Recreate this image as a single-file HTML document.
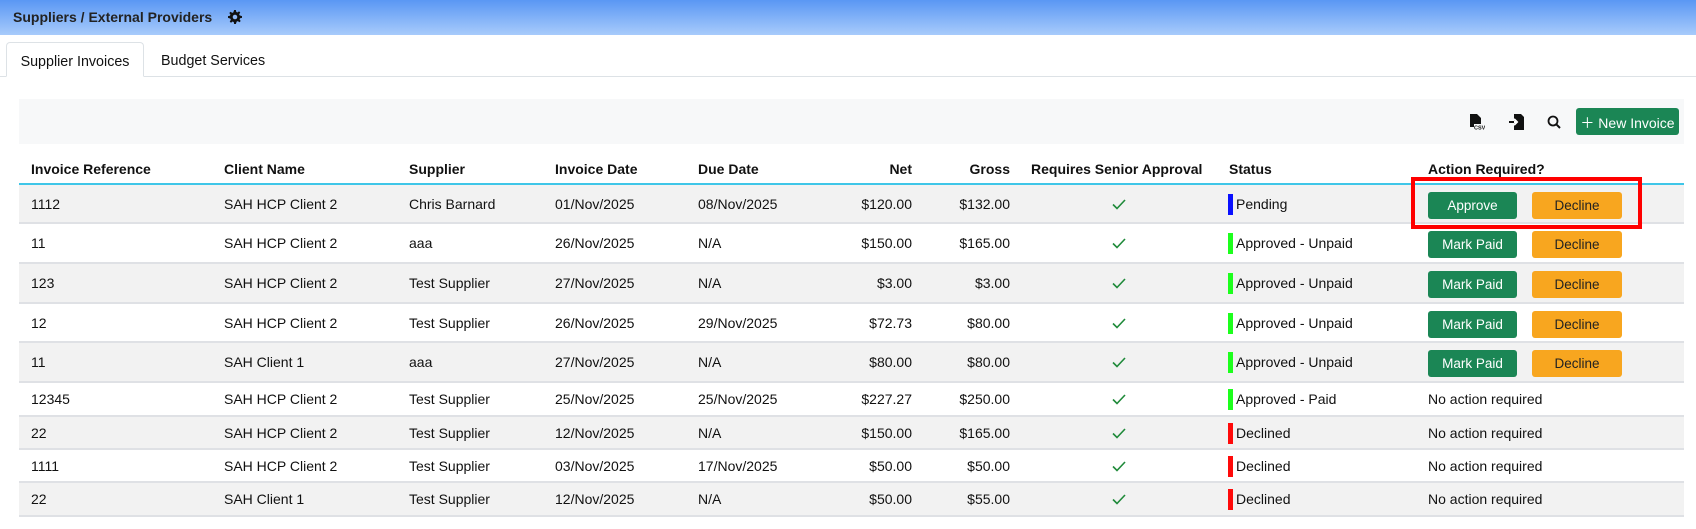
<!DOCTYPE html>
<html><head><style>
*{box-sizing:border-box;margin:0;padding:0}
body{width:1696px;height:529px;background:#fff;font-family:"Liberation Sans",Arial,sans-serif;color:#111;position:relative;overflow:hidden;font-size:14px}
.hdr{position:absolute;left:0;top:0;width:1696px;height:35px;background:linear-gradient(#5a97f4,#a8cbfb)}
.hdr .t{position:absolute;left:13px;top:9px;font-weight:bold;font-size:14px;color:#222}
.tabline{position:absolute;left:0;top:76px;width:1696px;height:1px;background:#dde2e6}
.tab{position:absolute;top:42px;height:35px;font-size:14.3px;padding-top:11px}
.tab.a{left:6px;width:138px;border:1px solid #dde2e6;border-bottom:1px solid #fff;border-radius:4px 4px 0 0;background:#fff;text-align:center}
.tb{position:absolute;left:19px;top:99px;width:1665px;height:45px;background:#f7f8f9}
.btn{position:absolute;border-radius:3px;text-align:center;font-size:13px}
.g{background:#1b8655;color:#fff}
.o{background:#f8a61f;color:#222}
.row{position:absolute;left:19px;width:1665px;border-bottom:2px solid #dfe1e5}
.c{position:absolute;font-size:14px}
.bar{position:absolute;width:5px;height:21px}
.th{font-weight:bold}
</style></head><body>
<div class="hdr"><div class="t">Suppliers / External Providers</div>
<svg style="position:absolute;left:228px;top:10px" width="14" height="14" viewBox="0 0 16 16"><path fill="#111" d="M7 0h2l.4 2.2 1.3.6 1.9-1.3 1.4 1.4-1.3 1.9.6 1.3L16 7v2l-2.2.4-.6 1.3 1.3 1.9-1.4 1.4-1.9-1.3-1.3.6L9 16H7l-.4-2.2-1.3-.6-1.9 1.3-1.4-1.4 1.3-1.9-.6-1.3L0 9V7l2.2-.4.6-1.3-1.3-1.9 1.4-1.4 1.9 1.3 1.3-.6z"/><circle cx="8" cy="8" r="2.6" fill="#8fb9f8"/></svg>
</div>
<div class="tabline"></div>
<div class="tab a">Supplier Invoices</div>
<div class="tab" style="left:161px">Budget Services</div>
<div class="tb"></div>
<svg style="position:absolute;left:1469px;top:114px" width="16" height="16" viewBox="0 0 16 16"><path d="M1 0h7l4 4v6H1z" fill="#111"/><path d="M1 10h4v3H1z" fill="#111"/><text x="5" y="15.5" font-size="5.5" font-weight="bold" fill="#111" font-family="Liberation Sans">CSV</text></svg>
<svg style="position:absolute;left:1509px;top:114px" width="16" height="16" viewBox="0 0 16 16"><path d="M5 0h7l3 3v13H5z" fill="#111"/><path d="M0 8h8M5 5l3 3-3 3" stroke="#fff" stroke-width="2" fill="none"/><path d="M0 8h5" stroke="#111" stroke-width="2"/></svg>
<svg style="position:absolute;left:1547px;top:115px" width="14" height="14" viewBox="0 0 14 14"><circle cx="6" cy="6" r="4.5" stroke="#111" stroke-width="1.8" fill="none"/><path d="M9.3 9.3L13 13" stroke="#111" stroke-width="2"/></svg>
<div class="btn g" style="left:1576px;top:108px;width:103px;height:27px;font-size:14px;padding-top:5px">&#xFF0B; New Invoice</div>

<div class="row" style="top:150px;height:35px;border-bottom:2px solid #3fc6e8"></div>
<div class="c th" style="left:31px;top:161px">Invoice Reference</div>
<div class="c th" style="left:224px;top:161px">Client Name</div>
<div class="c th" style="left:409px;top:161px">Supplier</div>
<div class="c th" style="left:555px;top:161px">Invoice Date</div>
<div class="c th" style="left:698px;top:161px">Due Date</div>
<div class="c th" style="right:784px;top:161px">Net</div>
<div class="c th" style="right:686px;top:161px">Gross</div>
<div class="c th" style="left:1031px;top:161px">Requires Senior Approval</div>
<div class="c th" style="left:1229px;top:161px">Status</div>
<div class="c th" style="left:1428px;top:161px">Action Required?</div>

<div id="rows"></div>
<script>
var R=[
["1112","SAH HCP Client 2","Chris Barnard","01/Nov/2025","08/Nov/2025","$120.00","$132.00","Pending","#0a10ff","Approve"],
["11","SAH HCP Client 2","aaa","26/Nov/2025","N/A","$150.00","$165.00","Approved - Unpaid","#1dff1d","Mark Paid"],
["123","SAH HCP Client 2","Test Supplier","27/Nov/2025","N/A","$3.00","$3.00","Approved - Unpaid","#1dff1d","Mark Paid"],
["12","SAH HCP Client 2","Test Supplier","26/Nov/2025","29/Nov/2025","$72.73","$80.00","Approved - Unpaid","#1dff1d","Mark Paid"],
["11","SAH Client 1","aaa","27/Nov/2025","N/A","$80.00","$80.00","Approved - Unpaid","#1dff1d","Mark Paid"],
["12345","SAH HCP Client 2","Test Supplier","25/Nov/2025","25/Nov/2025","$227.27","$250.00","Approved - Paid","#1dff1d",""],
["22","SAH HCP Client 2","Test Supplier","12/Nov/2025","N/A","$150.00","$165.00","Declined","#ff0a0a",""],
["1111","SAH HCP Client 2","Test Supplier","03/Nov/2025","17/Nov/2025","$50.00","$50.00","Declined","#ff0a0a",""],
["22","SAH Client 1","Test Supplier","12/Nov/2025","N/A","$50.00","$55.00","Declined","#ff0a0a",""]];
var tops=[185,224,264,304,343,383,417,450,483,517],h="";
for(var i=0;i<R.length;i++){var r=R[i],t=tops[i],hh=tops[i+1]-t,m=t+hh/2,ty=m-9;
h+='<div class="row" style="top:'+t+'px;height:'+hh+'px;background:'+(i%2?'#fff':'#f2f2f2')+'"></div>';
var L=[31,224,409,555,698];for(var j=0;j<5;j++)h+='<div class="c" style="left:'+L[j]+'px;top:'+ty+'px">'+r[j]+'</div>';
h+='<div class="c" style="right:784px;top:'+ty+'px">'+r[5]+'</div><div class="c" style="right:686px;top:'+ty+'px">'+r[6]+'</div>';
h+='<svg style="position:absolute;left:1112px;top:'+(m-6)+'px" width="14" height="11" viewBox="0 0 14 11"><path d="M1 5.5l4 4L13 1" stroke="#1f8a3a" stroke-width="1.6" fill="none"/></svg>';
h+='<div class="bar" style="left:1228px;top:'+(m-11)+'px;background:'+r[8]+'"></div><div class="c" style="left:1236px;top:'+ty+'px">'+r[7]+'</div>';
if(r[9]){h+='<div class="btn g" style="left:1428px;top:'+(m-13)+'px;width:89px;height:27px;padding-top:6px;font-size:13.5px">'+r[9]+'</div><div class="btn o" style="left:1532px;top:'+(m-13)+'px;width:90px;height:27px;padding-top:6px;font-size:13.5px">Decline</div>';}
else h+='<div class="c" style="left:1428px;top:'+ty+'px">No action required</div>';}
h+='<div style="position:absolute;left:1411px;top:177px;width:231px;height:52px;border:4px solid #f00"></div>';
document.getElementById('rows').innerHTML=h;
</script>
</body></html>
